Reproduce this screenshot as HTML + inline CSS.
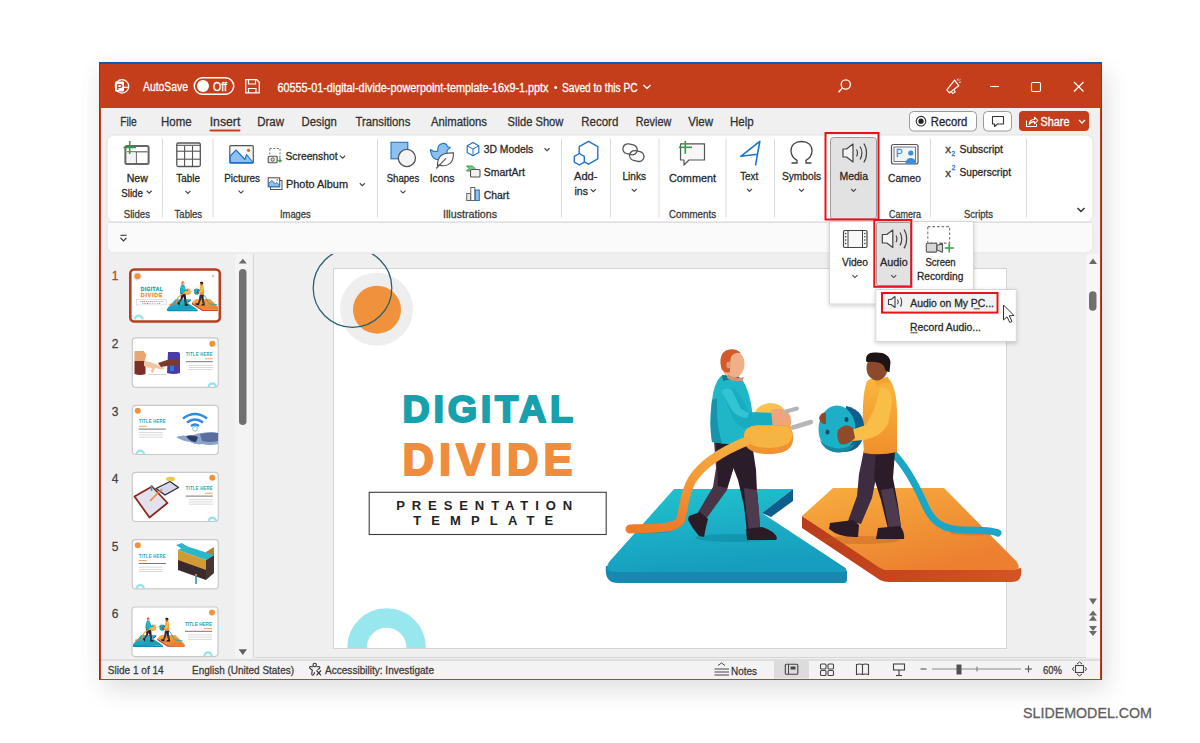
<!DOCTYPE html>
<html><head><meta charset="utf-8"><style>
html,body{margin:0;padding:0;background:#fff;width:1200px;height:743px;overflow:hidden}
#shadow{position:absolute;left:99px;top:62px;width:1003px;height:618px;box-shadow:5px 11px 24px rgba(0,0,0,0.10), 0 2px 26px rgba(0,0,0,0.04);}
svg{position:absolute;left:0;top:0}
text{font-family:"Liberation Sans",sans-serif}
</style></head><body>
<div id="shadow"></div>
<svg width="1200" height="743" viewBox="0 0 1200 743">
<rect x="99" y="62" width="1003" height="618" fill="#F0F0F0" />
<rect x="99" y="62" width="1003" height="2" fill="#0F5AA8" />
<rect x="99" y="62" width="1" height="618" fill="#2E4F78" />
<rect x="1101" y="62" width="1" height="618" fill="#2E4F78" />
<rect x="100" y="64" width="1001" height="44" fill="#C43E1C" />
<rect x="100" y="64" width="1" height="615" fill="#C43E1C" />
<rect x="1100" y="64" width="1" height="615" fill="#C43E1C" />
<rect x="100" y="679" width="1001" height="1" fill="#C43E1C" />
<rect x="101" y="108" width="999" height="25" fill="#F0F0F0" />
<rect x="107" y="135" width="986" height="87" fill="#FFFFFF" rx="7" stroke="#E3E3E3" stroke-width="1" />
<rect x="107" y="222" width="986" height="31" fill="#FAFAFA" rx="7" stroke="#E3E3E3" stroke-width="1" />
<rect x="108" y="222" width="984" height="8" fill="#FAFAFA" />
<line x1="108" y1="222.5" x2="1092" y2="222.5" stroke="#E0E0E0" stroke-width="1" />
<rect x="101" y="254" width="999" height="405" fill="#EFEFEF" />
<line x1="253.5" y1="254" x2="253.5" y2="658" stroke="#D6D6D6" stroke-width="1" />
<rect x="254" y="254" width="832" height="404" fill="#EFEFEF" />
<rect x="333.5" y="268.5" width="673" height="380" fill="#FFFFFF" stroke="#D4D4D4" stroke-width="1" />
<rect x="101" y="659" width="999" height="20" fill="#F3F3F3" />
<rect x="101" y="659" width="999" height="2" fill="#DEDEDE" />
<line x1="255" y1="657.5" x2="1086" y2="657.5" stroke="#D6D6D6" stroke-width="1" />
<circle cx="122" cy="86.4" r="6.7" fill="none" stroke="#fff" stroke-width="1.3"/>
<rect x="115" y="81.5" width="9" height="10" fill="#FFFFFF" rx="1" />
<line x1="124" y1="87.3" x2="129" y2="87.3" stroke="#FFFFFF" stroke-width="1.2" />
<text x="116.6" y="89.8" font-size="9.5" fill="#C43E1C" font-weight="bold" >P</text>
<text x="143" y="91" font-size="12" fill="#FFFFFF" stroke="#FFFFFF" stroke-width="0.28" textLength="45" lengthAdjust="spacingAndGlyphs" >AutoSave</text>
<rect x="194.25" y="77.75" width="39.5" height="16.5" fill="none" rx="8.25" stroke="#FFFFFF" stroke-width="1.5" />
<circle cx="203" cy="86" r="6" fill="#fff"/>
<text x="213" y="91" font-size="12" fill="#FFFFFF" stroke="#FFFFFF" stroke-width="0.28" textLength="14" lengthAdjust="spacingAndGlyphs" >Off</text>
<path d="M245.7,79.7 h11 l2.6,2.6 v10.5 h-13.6 z" fill="none" stroke="#FFFFFF" stroke-width="1.3" />
<path d="M248.5,80 v4 h7 v-4" fill="none" stroke="#FFFFFF" stroke-width="1.2" />
<path d="M248.5,93 v-4.5 h7.5 v4.5" fill="none" stroke="#FFFFFF" stroke-width="1.2" />
<text x="277.5" y="91.5" font-size="12" fill="#FFFFFF" stroke="#FFFFFF" stroke-width="0.28" textLength="271" lengthAdjust="spacingAndGlyphs" >60555-01-digital-divide-powerpoint-template-16x9-1.pptx</text>
<circle cx="555.7" cy="87.5" r="1.5" fill="#fff"/>
<text x="562" y="91.5" font-size="12" fill="#FFFFFF" stroke="#FFFFFF" stroke-width="0.28" textLength="75.5" lengthAdjust="spacingAndGlyphs" >Saved to this PC</text>
<path d="M643.5,85 l3.5,3.5 l3.5,-3.5" fill="none" stroke="#FFFFFF" stroke-width="1.4" />
<circle cx="845.8" cy="84.5" r="4.6" fill="none" stroke="#fff" stroke-width="1.3"/>
<line x1="842.5" y1="87.8" x2="838.5" y2="92.2" stroke="#FFFFFF" stroke-width="1.4" />
<path d="M946.8,89.8 L949.6,92.8 L958.8,85.8 L954.6,80.2 Z" fill="none" stroke="#FFFFFF" stroke-width="1.2" stroke-linejoin="round"/>
<path d="M951.2,91.6 l1.6,2 l2.4,-1.8 l-1,-1.6" fill="none" stroke="#FFFFFF" stroke-width="1.1" />
<line x1="957.2" y1="80.4" x2="958.2" y2="78.6" stroke="#FFFFFF" stroke-width="1" />
<line x1="958.8" y1="82.6" x2="960.8" y2="82" stroke="#FFFFFF" stroke-width="1" />
<line x1="959" y1="80.6" x2="960.2" y2="79.4" stroke="#FFFFFF" stroke-width="1" />
<line x1="990" y1="86.5" x2="999" y2="86.5" stroke="#FFFFFF" stroke-width="1.1" />
<rect x="1031.5" y="82.5" width="9" height="9" fill="none" rx="1.2" stroke="#FFFFFF" stroke-width="1.1" />
<line x1="1074" y1="82" x2="1083.5" y2="91.5" stroke="#FFFFFF" stroke-width="1.2" />
<line x1="1083.5" y1="82" x2="1074" y2="91.5" stroke="#FFFFFF" stroke-width="1.2" />
<text x="120.2" y="126" font-size="12.5" fill="#303030" stroke="#303030" stroke-width="0.28" textLength="16.6" lengthAdjust="spacingAndGlyphs" >File</text>
<text x="161" y="126" font-size="12.5" fill="#303030" stroke="#303030" stroke-width="0.28" textLength="30.6" lengthAdjust="spacingAndGlyphs" >Home</text>
<text x="209.7" y="126" font-size="12.5" fill="#303030" stroke="#303030" stroke-width="0.28" textLength="30.6" lengthAdjust="spacingAndGlyphs" >Insert</text>
<text x="257.2" y="126" font-size="12.5" fill="#303030" stroke="#303030" stroke-width="0.28" textLength="26.8" lengthAdjust="spacingAndGlyphs" >Draw</text>
<text x="301.5" y="126" font-size="12.5" fill="#303030" stroke="#303030" stroke-width="0.28" textLength="35.3" lengthAdjust="spacingAndGlyphs" >Design</text>
<text x="355.5" y="126" font-size="12.5" fill="#303030" stroke="#303030" stroke-width="0.28" textLength="54.8" lengthAdjust="spacingAndGlyphs" >Transitions</text>
<text x="431" y="126" font-size="12.5" fill="#303030" stroke="#303030" stroke-width="0.28" textLength="56" lengthAdjust="spacingAndGlyphs" >Animations</text>
<text x="507.5" y="126" font-size="12.5" fill="#303030" stroke="#303030" stroke-width="0.28" textLength="55.9" lengthAdjust="spacingAndGlyphs" >Slide Show</text>
<text x="581.2" y="126" font-size="12.5" fill="#303030" stroke="#303030" stroke-width="0.28" textLength="37.1" lengthAdjust="spacingAndGlyphs" >Record</text>
<text x="635.7" y="126" font-size="12.5" fill="#303030" stroke="#303030" stroke-width="0.28" textLength="35.6" lengthAdjust="spacingAndGlyphs" >Review</text>
<text x="688.2" y="126" font-size="12.5" fill="#303030" stroke="#303030" stroke-width="0.28" textLength="24.8" lengthAdjust="spacingAndGlyphs" >View</text>
<text x="730" y="126" font-size="12.5" fill="#303030" stroke="#303030" stroke-width="0.28" textLength="23.8" lengthAdjust="spacingAndGlyphs" >Help</text>
<rect x="209.5" y="129.5" width="31" height="2" fill="#C43E1C" rx="1" />
<rect x="909.5" y="111.5" width="67" height="19.5" fill="#FFFFFF" rx="4" stroke="#9A9A9A" stroke-width="1" />
<circle cx="921" cy="121.2" r="4.8" fill="none" stroke="#333" stroke-width="1.1"/>
<circle cx="921" cy="121.2" r="2.6" fill="#222"/>
<text x="930.8" y="125.8" font-size="12.5" fill="#262626" stroke="#262626" stroke-width="0.28" textLength="36.4" lengthAdjust="spacingAndGlyphs" >Record</text>
<rect x="983.5" y="111.5" width="28" height="19.5" fill="#FFFFFF" rx="4" stroke="#9A9A9A" stroke-width="1" />
<path d="M992.5,116.5 h11 v7.5 h-6 l-3,2.5 v-2.5 h-2 z" fill="none" stroke="#333" stroke-width="1.1" stroke-linejoin="round"/>
<rect x="1019" y="111" width="70" height="20" fill="#C43E1C" rx="4" />
<path d="M1026.5,120.5 v6 h10 v-2.5" fill="none" stroke="#FFFFFF" stroke-width="1.1" />
<path d="M1029,124.5 c0.5,-3.5 2.8,-5 5.5,-5 v-2.3 l3.3,3.3 l-3.3,3.3 v-2.2 c-2.2,0 -4,0.8 -5.5,2.9 z" fill="none" stroke="#FFFFFF" stroke-width="1.05" stroke-linejoin="round"/>
<text x="1040.5" y="125.8" font-size="12.5" fill="#FFFFFF" stroke="#FFFFFF" stroke-width="0.28" textLength="29" lengthAdjust="spacingAndGlyphs" >Share</text>
<path d="M1079,120 l3,3 l3,-3" fill="none" stroke="#FFFFFF" stroke-width="1.3" />
<line x1="162.5" y1="139" x2="162.5" y2="217.5" stroke="#DCDCDC" stroke-width="1" />
<line x1="213" y1="139" x2="213" y2="217.5" stroke="#DCDCDC" stroke-width="1" />
<line x1="377.5" y1="139" x2="377.5" y2="217.5" stroke="#DCDCDC" stroke-width="1" />
<line x1="561.5" y1="139" x2="561.5" y2="217.5" stroke="#DCDCDC" stroke-width="1" />
<line x1="610.5" y1="139" x2="610.5" y2="217.5" stroke="#DCDCDC" stroke-width="1" />
<line x1="659" y1="139" x2="659" y2="217.5" stroke="#DCDCDC" stroke-width="1" />
<line x1="726" y1="139" x2="726" y2="217.5" stroke="#DCDCDC" stroke-width="1" />
<line x1="774.5" y1="139" x2="774.5" y2="217.5" stroke="#DCDCDC" stroke-width="1" />
<line x1="930.5" y1="139" x2="930.5" y2="217.5" stroke="#DCDCDC" stroke-width="1" />
<line x1="1026.5" y1="139" x2="1026.5" y2="217.5" stroke="#DCDCDC" stroke-width="1" />
<text x="126.7" y="182.1" font-size="11" fill="#262626" stroke="#262626" stroke-width="0.28" textLength="21.2" lengthAdjust="spacingAndGlyphs" >New</text>
<text x="121.3" y="196.7" font-size="11" fill="#262626" stroke="#262626" stroke-width="0.28" textLength="21.6" lengthAdjust="spacingAndGlyphs" >Slide</text>
<path d="M146.7,190.75 l2.5,2.5 l2.5,-2.5" fill="none" stroke="#444" stroke-width="1.1" />
<text x="176.3" y="182.1" font-size="11" fill="#262626" stroke="#262626" stroke-width="0.28" textLength="23.7" lengthAdjust="spacingAndGlyphs" >Table</text>
<path d="M185.4,190.95 l2.5,2.5 l2.5,-2.5" fill="none" stroke="#444" stroke-width="1.1" />
<text x="224.2" y="182.1" font-size="11" fill="#262626" stroke="#262626" stroke-width="0.28" textLength="35.8" lengthAdjust="spacingAndGlyphs" >Pictures</text>
<path d="M238.5,190.55 l2.5,2.5 l2.5,-2.5" fill="none" stroke="#444" stroke-width="1.1" />
<text x="285.5" y="160" font-size="11" fill="#262626" stroke="#262626" stroke-width="0.28" textLength="52" lengthAdjust="spacingAndGlyphs" >Screenshot</text>
<path d="M340.1,155.75 l2.5,2.5 l2.5,-2.5" fill="none" stroke="#444" stroke-width="1.1" />
<text x="286" y="187.7" font-size="11" fill="#262626" stroke="#262626" stroke-width="0.28" textLength="62" lengthAdjust="spacingAndGlyphs" >Photo Album</text>
<path d="M359.8,183.25 l2.5,2.5 l2.5,-2.5" fill="none" stroke="#444" stroke-width="1.1" />
<text x="386.7" y="181.7" font-size="11" fill="#262626" stroke="#262626" stroke-width="0.28" textLength="32.5" lengthAdjust="spacingAndGlyphs" >Shapes</text>
<path d="M400.5,190.55 l2.5,2.5 l2.5,-2.5" fill="none" stroke="#444" stroke-width="1.1" />
<text x="429.7" y="181.7" font-size="11" fill="#262626" stroke="#262626" stroke-width="0.28" textLength="24.7" lengthAdjust="spacingAndGlyphs" >Icons</text>
<text x="483.7" y="153.2" font-size="11" fill="#262626" stroke="#262626" stroke-width="0.28" textLength="49.5" lengthAdjust="spacingAndGlyphs" >3D Models</text>
<path d="M544.5,148.25 l2.5,2.5 l2.5,-2.5" fill="none" stroke="#444" stroke-width="1.1" />
<text x="483.7" y="175.7" font-size="11" fill="#262626" stroke="#262626" stroke-width="0.28" textLength="41.3" lengthAdjust="spacingAndGlyphs" >SmartArt</text>
<text x="483.7" y="199" font-size="11" fill="#262626" stroke="#262626" stroke-width="0.28" textLength="25.5" lengthAdjust="spacingAndGlyphs" >Chart</text>
<text x="574" y="180.3" font-size="11" fill="#262626" stroke="#262626" stroke-width="0.28" textLength="23.5" lengthAdjust="spacingAndGlyphs" >Add-</text>
<text x="574.5" y="194.5" font-size="11" fill="#262626" stroke="#262626" stroke-width="0.28" textLength="13.5" lengthAdjust="spacingAndGlyphs" >ins</text>
<path d="M590.8,189.25 l2.5,2.5 l2.5,-2.5" fill="none" stroke="#444" stroke-width="1.1" />
<text x="622.5" y="180.3" font-size="11" fill="#262626" stroke="#262626" stroke-width="0.28" textLength="23.5" lengthAdjust="spacingAndGlyphs" >Links</text>
<path d="M631.7,188.95 l2.5,2.5 l2.5,-2.5" fill="none" stroke="#444" stroke-width="1.1" />
<text x="669" y="181.7" font-size="11" fill="#262626" stroke="#262626" stroke-width="0.28" textLength="47" lengthAdjust="spacingAndGlyphs" >Comment</text>
<text x="740.2" y="180.3" font-size="11" fill="#262626" stroke="#262626" stroke-width="0.28" textLength="18" lengthAdjust="spacingAndGlyphs" >Text</text>
<path d="M747.0,188.95 l2.5,2.5 l2.5,-2.5" fill="none" stroke="#444" stroke-width="1.1" />
<text x="782" y="180.3" font-size="11" fill="#262626" stroke="#262626" stroke-width="0.28" textLength="39" lengthAdjust="spacingAndGlyphs" >Symbols</text>
<path d="M799.0,188.95 l2.5,2.5 l2.5,-2.5" fill="none" stroke="#444" stroke-width="1.1" />
<text x="888" y="182" font-size="11" fill="#262626" stroke="#262626" stroke-width="0.28" textLength="33" lengthAdjust="spacingAndGlyphs" >Cameo</text>
<text x="959.5" y="153" font-size="11" fill="#262626" stroke="#262626" stroke-width="0.28" textLength="43.5" lengthAdjust="spacingAndGlyphs" >Subscript</text>
<text x="959.5" y="176" font-size="11" fill="#262626" stroke="#262626" stroke-width="0.28" textLength="51.5" lengthAdjust="spacingAndGlyphs" >Superscript</text>
<text x="123.8" y="217.5" font-size="10.5" fill="#3A3A3A" stroke="#3A3A3A" stroke-width="0.28" textLength="26.2" lengthAdjust="spacingAndGlyphs" >Slides</text>
<text x="174.6" y="217.5" font-size="10.5" fill="#3A3A3A" stroke="#3A3A3A" stroke-width="0.28" textLength="27.5" lengthAdjust="spacingAndGlyphs" >Tables</text>
<text x="280" y="217.5" font-size="10.5" fill="#3A3A3A" stroke="#3A3A3A" stroke-width="0.28" textLength="30.7" lengthAdjust="spacingAndGlyphs" >Images</text>
<text x="443" y="217.5" font-size="10.5" fill="#3A3A3A" stroke="#3A3A3A" stroke-width="0.28" textLength="54" lengthAdjust="spacingAndGlyphs" >Illustrations</text>
<text x="669" y="217.5" font-size="10.5" fill="#3A3A3A" stroke="#3A3A3A" stroke-width="0.28" textLength="47" lengthAdjust="spacingAndGlyphs" >Comments</text>
<text x="889" y="217.5" font-size="10.5" fill="#3A3A3A" stroke="#3A3A3A" stroke-width="0.28" textLength="32" lengthAdjust="spacingAndGlyphs" >Camera</text>
<text x="964" y="217.5" font-size="10.5" fill="#3A3A3A" stroke="#3A3A3A" stroke-width="0.28" textLength="29" lengthAdjust="spacingAndGlyphs" >Scripts</text>
<path d="M1077.5,208 l3.5,3.5 l3.5,-3.5" fill="none" stroke="#333" stroke-width="1.5" />
<rect x="125.4" y="146" width="23.2" height="18" fill="#FFFFFF" rx="1.5" stroke="#666" stroke-width="2" />
<line x1="127" y1="151.8" x2="147.5" y2="151.8" stroke="#666" stroke-width="1.2" />
<line x1="136.3" y1="151.8" x2="136.3" y2="163" stroke="#666" stroke-width="1.2" />
<rect x="127.2" y="152.5" width="8.5" height="10" fill="#F2F2F2" />
<line x1="123.5" y1="147.5" x2="136" y2="147.5" stroke="#2EA043" stroke-width="1.6" />
<line x1="129.7" y1="141" x2="129.7" y2="154" stroke="#2EA043" stroke-width="1.6" />
<rect x="176.8" y="143" width="23.5" height="23.5" fill="#FFFFFF" rx="1.5" stroke="#555" stroke-width="1.3" />
<line x1="176.8" y1="145.3" x2="200.3" y2="145.3" stroke="#555" stroke-width="1.1" />
<line x1="184.6" y1="146" x2="184.6" y2="166.5" stroke="#555" stroke-width="1.1" />
<line x1="192.5" y1="146" x2="192.5" y2="166.5" stroke="#555" stroke-width="1.1" />
<line x1="176.8" y1="151.2" x2="200.3" y2="151.2" stroke="#555" stroke-width="1.1" />
<line x1="176.8" y1="159.2" x2="200.3" y2="159.2" stroke="#555" stroke-width="1.1" />
<rect x="229.8" y="145.7" width="23.5" height="17.5" fill="#F7F7F7" rx="1" stroke="#555" stroke-width="1.2" />
<path d="M230.3,156 L236,150 L245,159.5 L246.5,154.5 L253,162.5 L230.3,162.5 Z" fill="#8CC0EE" stroke="#1F73C8" stroke-width="1.1" stroke-linejoin="round"/>
<circle cx="248.5" cy="150.3" r="1.6" fill="#E8641E"/>
<rect x="269.8" y="148.5" width="10.2" height="8.5" fill="none" stroke="#777" stroke-width="1" stroke-dasharray="2,1.5"/>
<rect x="268.2" y="156.3" width="9" height="6.5" fill="#E6E6E6" rx="1" stroke="#555" stroke-width="1.1" />
<circle cx="272.7" cy="159.6" r="1.6" fill="none" stroke="#555" stroke-width="0.9"/>
<path d="M280,157.5 v4 M278.3,160.2 l1.7,1.8 l1.7,-1.8" fill="none" stroke="#2EA043" stroke-width="1.2" />
<rect x="270.5" y="180.5" width="11.5" height="9" fill="none" stroke="#555" stroke-width="1" />
<rect x="268.2" y="177.8" width="11.5" height="9" fill="#FFFFFF" stroke="#555" stroke-width="1.1" />
<path d="M268.8,183 l3,-2.5 l3.5,3.3 l1.5,-1.5 l2.5,3 v1.3 h-10.5 z" fill="#8CC0EE" stroke="#1F73C8" stroke-width="0.9" />
<circle cx="277.3" cy="179.8" r="0.9" fill="#E8641E"/>
<rect x="391" y="142.3" width="16.8" height="16.5" fill="#8CC0EE" stroke="#1F73C8" stroke-width="1.1" />
<circle cx="406.9" cy="158" r="8.6" fill="#F4F4F4" stroke="#555" stroke-width="1.3"/>
<path d="M430.4,149.5 c2,2 5,2.3 7.5,1.5 c-0.5,-3 0.5,-6.5 4.5,-7.5 c2.8,-0.6 4.6,1 5,3.3 l2.8,0.5 l-3,3 c0.5,4.5 -2.5,8.3 -7,9.3 c-5.5,1 -9,-2.5 -9.8,-10.1 z" fill="#8CC0EE" stroke="#1F73C8" stroke-width="1.1" stroke-linejoin="round"/>
<path d="M437.5,166 c-0.5,-5 1.5,-11 8,-12.5 c3,-0.7 6,-0.6 8,-0.6 c0,3 -0.5,8 -3.5,10.5 c-3,2.5 -8,2.5 -11,1.5 z" fill="#FFFFFF" stroke="#555" stroke-width="1.1" />
<line x1="436.2" y1="168.5" x2="446" y2="158.3" stroke="#555" stroke-width="1.1" />
<path d="M473,142.5 l5.8,3.3 v6.6 l-5.8,3.3 l-5.8,-3.3 v-6.6 z" fill="#FFFFFF" stroke="#1F73C8" stroke-width="1.2" stroke-linejoin="round"/>
<path d="M467.5,146 l5.5,3 l5.5,-3 M473,149 v6.5" fill="none" stroke="#1F73C8" stroke-width="1" />
<path d="M466.5,166 h6 l2.5,2.5 l-2.5,2.5 h-6 l2.5,-2.5 z" fill="#7CCB8A" stroke="#2EA043" stroke-width="1" />
<rect x="470.5" y="169.5" width="9.5" height="7.5" fill="#F0F0F0" rx="1" stroke="#555" stroke-width="1.1" />
<rect x="466.7" y="193.5" width="3.8" height="7" fill="#E8E8E8" stroke="#666" stroke-width="1" />
<rect x="470.8" y="187.5" width="4" height="13" fill="#FFFFFF" stroke="#666" stroke-width="1" />
<rect x="475.3" y="190" width="4" height="10.5" fill="#8CC0EE" stroke="#1F73C8" stroke-width="1" />
<path d="M588.5,141.3 l9.3,5.3 v12.2 l-9.3,5.4 l-9.3,-5.4 v-12.2 z" fill="#FFFFFF" stroke="#1F73C8" stroke-width="1.4" stroke-linejoin="round"/>
<path d="M579.3,153.5 l5,2.9 v5.7 l-5,2.9 l-5,-2.9 v-5.7 z" fill="#FFFFFF" stroke="#1F73C8" stroke-width="1.4" stroke-linejoin="round"/>
<rect x="622.8" y="144.3" width="14.5" height="10" rx="5" fill="none" stroke="#555" stroke-width="1.3" transform="rotate(12 630 149.3)"/>
<rect x="629.5" y="151" width="14.5" height="10" rx="5" fill="none" stroke="#555" stroke-width="1.3" transform="rotate(12 636.7 156)"/>
<path d="M680.5,143.8 h24 v16.2 h-15.5 l-5,5 v-5 h-3.5 z" fill="#F7F7F7" stroke="#555" stroke-width="1.2" stroke-linejoin="round"/>
<line x1="679" y1="147.3" x2="692" y2="147.3" stroke="#2EA043" stroke-width="1.6" />
<line x1="685.3" y1="140.8" x2="685.3" y2="153.8" stroke="#2EA043" stroke-width="1.6" />
<path d="M740.8,156.3 L759.8,141.3 L755.6,164.8 M741,156.3 L757.5,154.3" fill="none" stroke="#1F73C8" stroke-width="1.6" stroke-linecap="round" stroke-linejoin="round"/>
<path d="M791.5,163 h5.5 v-2.6 c-3.8,-2.2 -6,-5.8 -6,-9.6 c0,-5.8 4.2,-9.3 10.5,-9.3 c6.3,0 10.5,3.5 10.5,9.3 c0,3.8 -2.2,7.4 -6,9.6 v2.6 h5.5" fill="none" stroke="#444" stroke-width="1.3" />
<rect x="830.5" y="137.5" width="46" height="81.5" fill="#E2E2E2" rx="3" stroke="#9C9C9C" stroke-width="1" />
<path d="M843,149 h3.5 l6.5,-5 v18 l-6.5,-5 h-3.5 z" fill="#F4F4F4" stroke="#444" stroke-width="1.2" stroke-linejoin="round"/>
<path d="M856.5,149.5 c1.3,1.8 1.3,5.2 0,7 M860,146.5 c2.5,3.5 2.5,9.5 0,13 M863.8,143.5 c3.6,5 3.6,14 0,19" fill="none" stroke="#444" stroke-width="1.2" />
<text x="839.5" y="180.3" font-size="11" fill="#262626" stroke="#262626" stroke-width="0.28" textLength="28.5" lengthAdjust="spacingAndGlyphs" >Media</text>
<path d="M851.0,188.95 l2.5,2.5 l2.5,-2.5" fill="none" stroke="#444" stroke-width="1.1" />
<rect x="825.5" y="133" width="53" height="86.5" fill="none" stroke="#EC1018" stroke-width="2" />
<rect x="891.5" y="144.5" width="26.5" height="19.5" fill="#FFFFFF" rx="2" stroke="#555" stroke-width="1.2" />
<rect x="894" y="147" width="21.5" height="14.5" fill="#F0F6FC" stroke="#555" stroke-width="0.8" />
<text x="896" y="157" font-size="10" fill="#3B8EDB" stroke="#3B8EDB" stroke-width="0.28" >P</text>
<circle cx="910.8" cy="153" r="2.6" fill="#3B8EDB"/>
<path d="M905.5,164 c0,-4 2.5,-6 5.3,-6 c2.8,0 5.3,2 5.3,6 z" fill="#3B8EDB" />
<text x="945.3" y="153" font-size="11.5" fill="#333" stroke="#333" stroke-width="0.28" >x</text>
<text x="951.5" y="155.5" font-size="6.5" fill="#1F73C8" stroke="#1F73C8" stroke-width="0.28" >2</text>
<text x="945.3" y="176.5" font-size="11.5" fill="#333" stroke="#333" stroke-width="0.28" >x</text>
<text x="951.7" y="169.5" font-size="6.5" fill="#1F73C8" stroke="#1F73C8" stroke-width="0.28" >2</text>
<line x1="120.5" y1="235.3" x2="126.5" y2="235.3" stroke="#333" stroke-width="1.1" />
<path d="M120.5,237.8 l3,3 l3,-3" fill="none" stroke="#333" stroke-width="1.2" />
<rect x="235" y="254" width="17" height="404" fill="#F4F4F4" />
<path d="M238.8,263.6 L242.8,258.8 L246.8,263.6 Z" fill="#6A6A6A" />
<rect x="239" y="269" width="7.5" height="156" fill="#707070" rx="3.75" />
<path d="M238.6,649.2 L242.8,655 L247,649.2 Z" fill="#5E5E5E" />
<rect x="1086.5" y="254" width="13" height="403" fill="#F7F7F7" />
<path d="M1089,264 L1093,258.5 L1097,264 Z" fill="#6A6A6A" />
<rect x="1089" y="291.2" width="7.5" height="19.5" fill="#707070" rx="3.75" />
<path d="M1089,598.5 L1093,604.4 L1097,598.5 Z" fill="#6A6A6A" />
<path d="M1089,615.5 L1093,610.4 L1097,615.5 Z M1089,620.7 L1093,615.6 L1097,620.7 Z" fill="#6A6A6A" />
<path d="M1089,626 L1093,631.1 L1097,626 Z M1089,631 L1093,636.1 L1097,631 Z" fill="#6A6A6A" />
<defs>
<linearGradient id="gTealTop" x1="0" y1="0" x2="0.3" y2="1"><stop offset="0" stop-color="#22C3CE"/><stop offset="1" stop-color="#169DBF"/></linearGradient>
<linearGradient id="gOrTop" x1="0" y1="0" x2="0.6" y2="1"><stop offset="0" stop-color="#F7AE3E"/><stop offset="1" stop-color="#EC7F30"/></linearGradient>
<linearGradient id="gPlug" x1="0" y1="0" x2="0" y2="1"><stop offset="0" stop-color="#F8C24C"/><stop offset="1" stop-color="#F0952E"/></linearGradient>
<linearGradient id="gShirtY" x1="0" y1="0" x2="0" y2="1"><stop offset="0" stop-color="#F9B63E"/><stop offset="1" stop-color="#F0902A"/></linearGradient>
<linearGradient id="gCableO" x1="0" y1="0" x2="0" y2="1"><stop offset="0" stop-color="#F6B040"/><stop offset="1" stop-color="#EE7A2A"/></linearGradient>
<clipPath id="slideClip"><rect x="334" y="269" width="672" height="379"/></clipPath>
<g id="slideContent">
<circle cx="376.5" cy="309.2" r="36.5" fill="#EEEEEE"/>
<circle cx="377" cy="309.7" r="24" fill="#F0913C"/>
<circle cx="967" cy="308" r="10" fill="#F7C99C"/><circle cx="967" cy="308" r="5" fill="#F4B070"/>
<g clip-path="url(#slideClip)"><circle cx="386.6" cy="647.5" r="29.5" fill="none" stroke="#98E6EE" stroke-width="19.5"/></g>
<text x="402.6" y="421.6" font-size="37.8" font-weight="bold" fill="#17A1AD" stroke="#17A1AD" stroke-width="2" stroke-linejoin="round" textLength="170.5" lengthAdjust="spacing">DIGITAL</text>
<text x="402.6" y="474.8" font-size="43.5" font-weight="bold" fill="#F08D3D" stroke="#F08D3D" stroke-width="2" stroke-linejoin="round" textLength="169.8" lengthAdjust="spacing">DIVIDE</text>
<rect x="369.2" y="492.3" width="237" height="42.2" fill="none" stroke="#3C3C3C" stroke-width="1.1" />
<text x="396.2" y="510.2" font-size="13" fill="#222" textLength="176" lengthAdjust="spacing" font-weight="bold" >PRESENTATION</text>
<text x="413.2" y="525.3" font-size="13" fill="#222" textLength="140" lengthAdjust="spacing" font-weight="bold" >TEMPLATE</text>
<g id="illusOnly">
<path d="M606,566 Q604,583 618,583 H844 Q847,583 847,579 V571 Z" fill="#1689B0" />
<path d="M674,489 H793 L762,513 L844,567 Q848.5,570 845,572 H616 Q603,572 609,562 Z" fill="url(#gTealTop)" />
<path d="M793,489 V501 L771,517 L762,513 Z" fill="#0F5F8E" />
<linearGradient id="gOrFront" x1="0" y1="0" x2="1" y2="0"><stop offset="0" stop-color="#B93C1B"/><stop offset="0.45" stop-color="#C8461E"/><stop offset="1" stop-color="#D45523"/></linearGradient>
<path d="M802,516 V528 L880,580 Q884,582 889,582 H1012 Q1023,582 1021,568 L1012,570 H886 Z" fill="url(#gOrFront)" />
<path d="M833,488 H944 L1016,561 Q1023,570 1012,570 H887 Q883,570 880,568 L802,516 Z" fill="url(#gOrTop)" />
<ellipse cx="735" cy="538" rx="40" ry="4" fill="#0F7F9A" opacity="0.45"/>
<ellipse cx="860" cy="540" rx="40" ry="4" fill="#B45A20" opacity="0.35"/>
<ellipse cx="650" cy="531" rx="20" ry="2.5" fill="#0F7F9A" opacity="0.4"/>
<ellipse cx="975" cy="533" rx="25" ry="2.5" fill="#B45A20" opacity="0.3"/>
<path d="M714,441 L738,443 L733,470 L727,490 L706,519 L697,514 L713,487 L716,468 Z" fill="#4A3548" />
<path d="M716,441 L738,443 L734,466 L727,488 L718,486 Z" fill="#2A1C28" />
<path d="M689,516 L700,512 L708,519 L706,527 L704,537 L699,536 Q692,528 688,520 Z" fill="#2A1B26" />
<path d="M730,441 L752,443 L756,470 L757,492 L759,512 L760,531 L747,532 L744,506 L738,480 L731,462 Z" fill="#2A1C28" />
<path d="M744,488 L757,490 L759,512 L760,531 L749,532 L746,510 Z" fill="#4E3A4E" />
<path d="M746,529 L762,527 Q775,531 777,538 L776,540 H747 Z" fill="#2A1B26" />
<path d="M721,376 Q733,372 742,379 Q750,392 752,410 L753,443 Q731,446 712,442 Q709,424 712,400 Q714,383 721,376 Z" fill="#1FB6C8" />
<path d="M712,400 Q709,424 712,442 Q718,443 722,443 Q716,425 717,398 Z" fill="#1794AB" />
<path d="M722,375 L738,376 L741,381 Q731,378 723,381 Z" fill="#137A8E" />
<ellipse cx="733" cy="364" rx="11.5" ry="14" fill="#EFB088"/>
<path d="M721.5,369 Q718,355 726,350.5 Q735,347 741,353 Q734,352 731,357 Q729,364 730,372 Q725,374 721.5,369 Z" fill="#D35A2A" />
<ellipse cx="728.5" cy="365" rx="2.2" ry="3.2" fill="#E39A72"/>
<path d="M728,374 Q735,380 744,377 L742,381 Q733,382 727,378 Z" fill="#D8926A" />
<path d="M752,428 Q751,405 770,403 Q788,403 791,428 Z" fill="#F9C250" />
<path d="M722,392 Q731,383 739,394 L749,412 L776,413 L777,426 L745,428 Q735,426 731,414 Z" fill="#19ABC0" />
<path d="M721,391 Q727,386 732,390 L741,409 L749,413 L747,418 Q738,417 733,412 Z" fill="#33C4D3" />
<path d="M771,410 Q780,406 788,412 Q793,419 790,427 L773,428 Z" fill="#EFA57C" />
<path d="M744,437 Q744,426 758,425 L788,425 Q794,430 793,440 Q792,453 772,454 Q748,455 744,442 Z" fill="#F0922F" />
<path d="M744,436 Q744,426 758,425.5 L787,425.5 Q793,430 792,437 Q790,447 770,448 Q748,448 744,436 Z" fill="#F6B443" />
<line x1="786" y1="411.5" x2="797" y2="408.5" stroke="#B5B5B5" stroke-width="4" stroke-linecap="round"/>
<line x1="793" y1="427.5" x2="811" y2="422" stroke="#B5B5B5" stroke-width="4.5" stroke-linecap="round"/>
<path d="M747,441 C725,450 703,462 692,480 C683,495 684,512 680,521 C675,528 662,528 630,529" fill="none" stroke="url(#gCableO)" stroke-width="9" stroke-linecap="round"/>
<path d="M892,452 C906,466 916,485 924,503 C932,522 942,530 965,530 C985,530 994,531 998,533" fill="none" stroke="#1AA6C4" stroke-width="7" stroke-linecap="round"/>
<path d="M864,450 L882,452 L876,478 L872,498 L861,524 L848,521 L857,496 L859,474 Z" fill="#3E2D40" />
<path d="M830,523 L853,520 L859,525 L858,537 Q840,538 829,529 Z" fill="#2A1B26" />
<path d="M876,450 L895,452 L893,478 L898,505 L901,527 L888,529 L881,500 L874,478 Z" fill="#2A1C28" />
<path d="M881,490 L893,488 L898,510 L901,527 L889,529 Z" fill="#4E3A4E" />
<path d="M878,528 L900,526 Q905,532 904,539 L876,539 Z" fill="#2A1B26" />
<path d="M867,381 Q878,374 890,380 Q897,390 897,415 L897,452 Q880,456 864,453 Q862,430 863,405 Q864,388 867,381 Z" fill="url(#gShirtY)" />
<path d="M874,379 L888,377 L891,384 Q882,381 877,387 Z" fill="#F4A52E" />
<path d="M846,406 Q866,410 864,432 Q862,452 843,452 Z" fill="#125E8A" />
<ellipse cx="837" cy="429" rx="18.5" ry="23.5" fill="#1DAFC7"/>
<path d="M820,440 Q824,452 840,452.5 Q852,452 855,443 Q845,450 835,448 Q824,446 820,440 Z" fill="#17889F" />
<ellipse cx="846.5" cy="419.5" rx="2" ry="2.6" fill="#0D4C6A"/>
<ellipse cx="827.5" cy="432" rx="2" ry="2.6" fill="#0D4C6A"/>
<path d="M880,388 Q892,386 892,402 L888,424 Q881,437 864,440 L852,441 L851,430 L866,425 L874,410 Z" fill="#F9BE48" />
<path d="M838,430 Q846,422 853,428 L855,438 Q848,446 840,444 Q836,438 838,430 Z" fill="#8E4A2A" />
<path d="M819,418 Q821,412 826,413 L826,424 Q821,425 819,418 Z" fill="#8E4A2A" />
<ellipse cx="877" cy="368" rx="10.5" ry="12.5" fill="#8A4A2B"/>
<path d="M866,361 Q865,352 875,352.5 Q889,352 890.5,362 L889.5,372 Q885,372 884,366 Q880,361 867,362 Z" fill="#1E1416" />
</g>
</g>
</defs>
<clipPath id="canvasClip"><rect x="254" y="254" width="832" height="404"/></clipPath>
<g clip-path="url(#canvasClip)"><use href="#slideContent"/><circle cx="352.5" cy="288" r="39.3" fill="none" stroke="#24606F" stroke-width="1.25"/></g>
<text x="111.7" y="279.5" font-size="12" fill="#C4411E" stroke="#C4411E" stroke-width="0.28" >1</text>
<text x="111.7" y="348" font-size="12" fill="#444" stroke="#444" stroke-width="0.28" >2</text>
<text x="111.7" y="415.5" font-size="12" fill="#444" stroke="#444" stroke-width="0.28" >3</text>
<text x="111.7" y="483" font-size="12" fill="#444" stroke="#444" stroke-width="0.28" >4</text>
<text x="111.7" y="550.5" font-size="12" fill="#444" stroke="#444" stroke-width="0.28" >5</text>
<text x="111.7" y="618" font-size="12" fill="#444" stroke="#444" stroke-width="0.28" >6</text>
<rect x="130.3" y="269.5" width="89.5" height="52" fill="#FFFFFF" rx="4" stroke="#B5401F" stroke-width="2.6" />
<clipPath id="t1clip"><rect x="132" y="271" width="86" height="49" rx="2.5"/></clipPath>
<g clip-path="url(#t1clip)"><use href="#slideContent" transform="translate(132,271) scale(0.12798) translate(-334,-269)"/></g>
<rect x="132.3" y="337.9" width="86" height="49.4" fill="#FFFFFF" rx="3.5" stroke="#C9C9C9" stroke-width="1.2" />
<circle cx="212.3" cy="343.7" r="3" fill="#F0913C"/>
<g><clipPath id="rc337"><rect x="132.3" y="337.9" width="86" height="49"/></clipPath><circle cx="212.3" cy="386.9" r="3.6" fill="none" stroke="#8FE3EC" stroke-width="2.2" clip-path="url(#rc337)"/></g>
<text x="185.8" y="355.9" font-size="4.6" font-weight="bold" fill="#1FA3B3" textLength="27" lengthAdjust="spacingAndGlyphs" style="letter-spacing:0.3px">TITLE HERE</text>
<rect x="204.8" y="358.4" width="8" height="0.8" fill="#F0913C" />
<rect x="185.8" y="361.2" width="27" height="1" fill="#777" />
<rect x="188.8" y="364.9" width="24" height="0.8" fill="#CFCFCF" />
<rect x="188.8" y="367.09999999999997" width="24" height="0.8" fill="#CFCFCF" />
<rect x="188.8" y="369.29999999999995" width="24" height="0.8" fill="#CFCFCF" />
<path d="M134.5,351 h9 l3,4 l-2,6 h-10 z" fill="#E6A870" />
<path d="M134.5,361 h11 v13 q-5,2 -11,0 z" fill="#7E2F25" />
<path d="M144,361 q8,1 14,4 l7,3 q-2,2 -5,1 l-5,-1 l-2,5 q-2,0 -2,-2 l1,-3 q-5,0 -8,-2 z" fill="#F2C4A2" />
<path d="M168,352 h10 q2,0 2,2 v19 q-6,2 -13,0 z" fill="#4B3BA8" />
<rect x="170" y="362" width="4" height="9" fill="#2E7AD6" />
<path d="M158,363 l9,-3 l13,0 v5 l-13,1 l-6,1 z" fill="#7A3A2E" />
<line x1="148" y1="374.5" x2="166" y2="374.5" stroke="#CCCCCC" stroke-width="0.8" />
<rect x="132.3" y="405.3" width="86" height="49.2" fill="#FFFFFF" rx="3.5" stroke="#C9C9C9" stroke-width="1.2" />
<circle cx="137.8" cy="410.8" r="3" fill="#F0913C"/>
<g><clipPath id="rc405"><rect x="132.3" y="405.3" width="86" height="49"/></clipPath><circle cx="140.3" cy="454.3" r="3.6" fill="none" stroke="#8FE3EC" stroke-width="2.2" clip-path="url(#rc405)"/></g>
<text x="138.8" y="423.3" font-size="4.6" font-weight="bold" fill="#1FA3B3" textLength="27" lengthAdjust="spacingAndGlyphs" style="letter-spacing:0.3px">TITLE HERE</text>
<rect x="138.8" y="425.8" width="8" height="0.8" fill="#F0913C" />
<rect x="138.8" y="428.6" width="27" height="1" fill="#777" />
<rect x="138.8" y="432.3" width="24" height="0.8" fill="#CFCFCF" />
<rect x="138.8" y="434.5" width="24" height="0.8" fill="#CFCFCF" />
<rect x="138.8" y="436.7" width="24" height="0.8" fill="#CFCFCF" />
<path d="M183,418.5 q12,-9 24,0" fill="none" stroke="#2E8AE0" stroke-width="2.6" />
<path d="M187,422.5 q8,-6 16,0" fill="none" stroke="#2E8AE0" stroke-width="2.4" />
<path d="M191,426 q4,-3 8,0" fill="none" stroke="#2E8AE0" stroke-width="2.2" />
<circle cx="195" cy="428.8" r="2.4" fill="none" stroke="#7CC4EE" stroke-width="1"/>
<path d="M176,437 q8,-3 14,0 q6,-4 12,-4 q10,-2 16,0 v11 q-8,2 -16,0 q-6,1 -12,-2 q-8,-1 -14,-5 z" fill="#8AA4CC" />
<path d="M186,436 q6,-2 12,1 l-2,5 q-6,0 -10,-6 z" fill="#2A3C6A" />
<path d="M200,434 q8,-2 18,-1 v8 q-8,2 -16,0 z" fill="#5A6E9E" />
<rect x="132.3" y="472.3" width="86" height="49.2" fill="#FFFFFF" rx="3.5" stroke="#C9C9C9" stroke-width="1.2" />
<circle cx="212.3" cy="477.8" r="3" fill="#F0913C"/>
<g><clipPath id="rc472"><rect x="132.3" y="472.3" width="86" height="49"/></clipPath><circle cx="212.3" cy="521.3" r="3.6" fill="none" stroke="#8FE3EC" stroke-width="2.2" clip-path="url(#rc472)"/></g>
<text x="185.8" y="490.3" font-size="4.6" font-weight="bold" fill="#1FA3B3" textLength="27" lengthAdjust="spacingAndGlyphs" style="letter-spacing:0.3px">TITLE HERE</text>
<rect x="204.8" y="492.8" width="8" height="0.8" fill="#F0913C" />
<rect x="185.8" y="495.6" width="27" height="1" fill="#777" />
<rect x="188.8" y="499.3" width="24" height="0.8" fill="#CFCFCF" />
<rect x="188.8" y="501.5" width="24" height="0.8" fill="#CFCFCF" />
<rect x="188.8" y="503.7" width="24" height="0.8" fill="#CFCFCF" />
<path d="M134.5,496.5 L152,486.5 L167.5,503 L149.5,517.5 Z" fill="#E2E2EE" stroke="#8A2A1E" stroke-width="1.8" stroke-linejoin="round"/>
<path d="M156,488.5 L170,481.5 L178.5,487.5 L165,495 Z" fill="#D8D8E8" stroke="#2A2A3A" stroke-width="1.3" stroke-linejoin="round"/>
<line x1="150" y1="501" x2="162" y2="489" stroke="#E8863A" stroke-width="1.6" />
<ellipse cx="170.5" cy="479" rx="4.5" ry="2.2" fill="#F6C64A"/>
<line x1="151.5" y1="485" x2="151.5" y2="491" stroke="#2AA6C0" stroke-width="1.6" />
<rect x="132.3" y="539.7" width="86" height="49.2" fill="#FFFFFF" rx="3.5" stroke="#C9C9C9" stroke-width="1.2" />
<circle cx="137.8" cy="545.2" r="3" fill="#F0913C"/>
<g><clipPath id="rc539"><rect x="132.3" y="539.7" width="86" height="49"/></clipPath><circle cx="140.3" cy="588.7" r="3.6" fill="none" stroke="#8FE3EC" stroke-width="2.2" clip-path="url(#rc539)"/></g>
<text x="138.8" y="557.7" font-size="4.6" font-weight="bold" fill="#1FA3B3" textLength="27" lengthAdjust="spacingAndGlyphs" style="letter-spacing:0.3px">TITLE HERE</text>
<rect x="138.8" y="560.2" width="8" height="0.8" fill="#F0913C" />
<rect x="138.8" y="563.0" width="27" height="1" fill="#777" />
<rect x="138.8" y="566.7" width="24" height="0.8" fill="#CFCFCF" />
<rect x="138.8" y="568.9000000000001" width="24" height="0.8" fill="#CFCFCF" />
<rect x="138.8" y="571.1" width="24" height="0.8" fill="#CFCFCF" />
<path d="M178,556 l28,10 v14 l-28,-10 z" fill="#3A2A2E" />
<path d="M178,550 l28,10 v10 l-28,-10 z" fill="#D19A35" />
<path d="M206,560 l8,-5 v18 l-8,7 z" fill="#4A3430" />
<path d="M206,560 l8,-5 v-8 l-8,5 z" fill="#B47E2A" />
<path d="M178,550 l8,-4 l28,9 l-8,5 z" fill="#2CB6C9" />
<path d="M176,545 l6,-2 l6,4 l-6,2 z" fill="#2CB6C9" />
<line x1="196" y1="576" x2="196" y2="584" stroke="#2A8AB0" stroke-width="1.5" />
<circle cx="196" cy="575" r="1.2" fill="#C97A4A"/>
<rect x="132" y="607" width="86" height="49.6" fill="#FFFFFF" rx="3.5" stroke="#C9C9C9" stroke-width="1.2" />
<clipPath id="t6clip"><rect x="133" y="608" width="84" height="48"/></clipPath>
<g clip-path="url(#t6clip)"><g transform="translate(132.5,617.4) scale(0.1265) translate(-606,-349)"><use href="#illusOnly"/></g></g>
<circle cx="212" cy="612.5" r="3" fill="#F0913C"/>
<text x="185" y="625.5" font-size="4.6" font-weight="bold" fill="#1FA3B3" textLength="27" lengthAdjust="spacingAndGlyphs">TITLE HERE</text>
<rect x="204" y="628" width="8" height="0.8" fill="#F0913C" />
<rect x="185" y="630.8" width="27" height="1" fill="#777" />
<rect x="188" y="634.5" width="24" height="0.8" fill="#CFCFCF" />
<rect x="188" y="636.7" width="24" height="0.8" fill="#CFCFCF" />
<rect x="188" y="638.9" width="24" height="0.8" fill="#CFCFCF" />
<g clip-path="url(#t6clip)"><circle cx="208" cy="656" r="3.6" fill="none" stroke="#8FE3EC" stroke-width="2.2"/></g>
<filter id="dsh" x="-20%" y="-20%" width="140%" height="140%"><feDropShadow dx="0" dy="1.5" stdDeviation="2" flood-color="#000" flood-opacity="0.18"/></filter>
<rect x="829.5" y="221.5" width="144" height="82.5" fill="#FFFFFF" stroke="#D6D6D6" stroke-width="1" filter="url(#dsh)"/>
<rect x="843.5" y="230.5" width="23.5" height="17" fill="#F8F8F8" rx="1.2" stroke="#444" stroke-width="1.2" />
<line x1="848" y1="230.5" x2="848" y2="247.5" stroke="#444" stroke-width="1" />
<line x1="862.5" y1="230.5" x2="862.5" y2="247.5" stroke="#444" stroke-width="1" />
<circle cx="845.7" cy="233.5" r="0.75" fill="#333"/><circle cx="864.8" cy="233.5" r="0.75" fill="#333"/>
<circle cx="845.7" cy="236.8" r="0.75" fill="#333"/><circle cx="864.8" cy="236.8" r="0.75" fill="#333"/>
<circle cx="845.7" cy="240.1" r="0.75" fill="#333"/><circle cx="864.8" cy="240.1" r="0.75" fill="#333"/>
<circle cx="845.7" cy="243.4" r="0.75" fill="#333"/><circle cx="864.8" cy="243.4" r="0.75" fill="#333"/>
<text x="842" y="265.9" font-size="11" fill="#262626" stroke="#262626" stroke-width="0.28" textLength="26" lengthAdjust="spacingAndGlyphs" >Video</text>
<path d="M852.5,275.05 l2.5,2.5 l2.5,-2.5" fill="none" stroke="#444" stroke-width="1.1" />
<rect x="876.5" y="222.5" width="34" height="63" fill="#E2E2E2" rx="2" stroke="#9C9C9C" stroke-width="1" />
<path d="M882.3,234.5 h4.5 l6,-4.5 v17.5 l-6,-4.5 h-4.5 z" fill="#F4F4F4" stroke="#444" stroke-width="1.2" stroke-linejoin="round"/>
<path d="M896,235.5 c1.2,1.6 1.2,5 0,6.6 M900,232.5 c2.3,3.3 2.3,9.5 0,12.8 M904,229.5 c3.5,4.8 3.5,14 0,18.8" fill="none" stroke="#444" stroke-width="1.2" />
<text x="880" y="265.9" font-size="11" fill="#262626" stroke="#262626" stroke-width="0.28" textLength="27.7" lengthAdjust="spacingAndGlyphs" >Audio</text>
<path d="M891.2,275.05 l2.5,2.5 l2.5,-2.5" fill="none" stroke="#444" stroke-width="1.1" />
<rect x="874.3" y="220" width="37" height="66.8" fill="none" stroke="#EC1018" stroke-width="2" />
<rect x="927.8" y="226.6" width="21.8" height="16.5" fill="none" stroke="#777" stroke-width="1.1" stroke-dasharray="2.6,2"/>
<rect x="926.3" y="243.3" width="10.5" height="8.8" fill="#D6D6D6" rx="1" stroke="#555" stroke-width="1.1" />
<path d="M937,245.5 l5.5,-2.3 v9 l-5.5,-2.3 z" fill="#D6D6D6" stroke="#555" stroke-width="1.1" stroke-linejoin="round"/>
<line x1="944.7" y1="248" x2="953.8" y2="248" stroke="#2EA043" stroke-width="1.5" />
<line x1="949.2" y1="243.5" x2="949.2" y2="252.5" stroke="#2EA043" stroke-width="1.5" />
<text x="925.4" y="265.9" font-size="11" fill="#262626" stroke="#262626" stroke-width="0.28" textLength="30.3" lengthAdjust="spacingAndGlyphs" >Screen</text>
<text x="917" y="280" font-size="11" fill="#262626" stroke="#262626" stroke-width="0.28" textLength="46.3" lengthAdjust="spacingAndGlyphs" >Recording</text>
<rect x="875.8" y="289.5" width="140.5" height="52" fill="#FFFFFF" stroke="#D6D6D6" stroke-width="1" filter="url(#dsh)"/>
<rect x="882" y="293" width="114.5" height="19" fill="#F2F2F2" />
<path d="M888.5,299.5 h2.5 l4,-3 v11 l-4,-3 h-2.5 z" fill="none" stroke="#444" stroke-width="1.1" stroke-linejoin="round"/>
<path d="M897.5,299.5 c0.8,1.2 0.8,3.6 0,4.8 M900.5,297.5 c1.5,2.3 1.5,6.8 0,9.1" fill="none" stroke="#444" stroke-width="1.1" />
<text x="910.3" y="307" font-size="11" fill="#262626" stroke="#262626" stroke-width="0.28" textLength="83.6" lengthAdjust="spacingAndGlyphs" >Audio on My PC...</text>
<line x1="973.8" y1="308.8" x2="979.8" y2="308.8" stroke="#333" stroke-width="0.9" />
<rect x="882" y="293" width="115.5" height="19.6" fill="none" stroke="#EC1018" stroke-width="2" />
<text x="910" y="331" font-size="11" fill="#262626" stroke="#262626" stroke-width="0.28" textLength="71" lengthAdjust="spacingAndGlyphs" >Record Audio...</text>
<line x1="910.5" y1="332.8" x2="917.5" y2="332.8" stroke="#333" stroke-width="0.9" />
<path d="M1003.5,305 V320 L1007,316.8 L1009.8,322.5 L1012,321.5 L1009.3,315.8 L1014,315.5 Z" fill="#FFFFFF" stroke="#333" stroke-width="1" stroke-linejoin="round"/>
<text x="107.8" y="674.2" font-size="11" fill="#3A3A3A" stroke="#3A3A3A" stroke-width="0.28" textLength="55.9" lengthAdjust="spacingAndGlyphs" >Slide 1 of 14</text>
<text x="192" y="674.2" font-size="11" fill="#3A3A3A" stroke="#3A3A3A" stroke-width="0.28" textLength="102" lengthAdjust="spacingAndGlyphs" >English (United States)</text>
<circle cx="314.7" cy="665" r="1.7" fill="none" stroke="#333" stroke-width="1.1"/>
<path d="M312.8,667 c-1.5,-0.8 -3.3,-0.6 -3.3,0.6 c0,1.1 1.6,1.8 2.8,2.3 c-0.3,1.8 -0.6,3.3 -0.5,4.6 c0.2,1 1.3,1 1.7,0.3 l1.2,-2.6" fill="none" stroke="#333" stroke-width="1.1" stroke-linejoin="round"/>
<path d="M316.6,667 c1.5,-0.8 3.3,-0.6 3.3,0.6 c0,1 -1.2,1.7 -2.3,2.1" fill="none" stroke="#333" stroke-width="1.1" />
<path d="M316.5,670.5 l4.5,4.8 M321,670.5 l-4.5,4.8" fill="none" stroke="#333" stroke-width="1.1" />
<text x="325" y="674.1" font-size="11" fill="#3A3A3A" stroke="#3A3A3A" stroke-width="0.28" textLength="109" lengthAdjust="spacingAndGlyphs" >Accessibility: Investigate</text>
<path d="M718,665.5 l3.5,-2.5 l3.5,2.5" fill="none" stroke="#444" stroke-width="1" />
<line x1="714.5" y1="669" x2="729" y2="669" stroke="#444" stroke-width="1" />
<line x1="714.5" y1="672" x2="729" y2="672" stroke="#444" stroke-width="1" />
<line x1="714.5" y1="675" x2="729" y2="675" stroke="#444" stroke-width="1" />
<text x="731" y="674.6" font-size="11" fill="#3A3A3A" stroke="#3A3A3A" stroke-width="0.28" textLength="26" lengthAdjust="spacingAndGlyphs" >Notes</text>
<rect x="774" y="660" width="35" height="18.5" fill="#DCDCDC" />
<rect x="785.3" y="664.3" width="12.5" height="10" fill="none" rx="1" stroke="#444" stroke-width="1.1" />
<line x1="788.5" y1="664.5" x2="788.5" y2="674.3" stroke="#444" stroke-width="1" />
<rect x="790.5" y="666.5" width="5" height="3" fill="#444" />
<rect x="820.5" y="664" width="5.5" height="5" fill="none" rx="1" stroke="#444" stroke-width="1.1" />
<rect x="828" y="664" width="5.5" height="5" fill="none" rx="1" stroke="#444" stroke-width="1.1" />
<rect x="820.5" y="670.5" width="5.5" height="5" fill="none" rx="1" stroke="#444" stroke-width="1.1" />
<rect x="828" y="670.5" width="5.5" height="5" fill="none" rx="1" stroke="#444" stroke-width="1.1" />
<path d="M856.5,664.5 q3,-1 6,0 q3,-1 6,0 v10 q-3,-1 -6,0 q-3,-1 -6,0 z M862.5,664.5 v10" fill="none" stroke="#444" stroke-width="1.1" />
<rect x="893.5" y="664" width="11" height="6" fill="none" stroke="#444" stroke-width="1.1" />
<line x1="899" y1="670" x2="899" y2="675.5" stroke="#444" stroke-width="1.1" />
<line x1="896" y1="675.5" x2="902" y2="675.5" stroke="#444" stroke-width="1.1" />
<line x1="920.5" y1="669" x2="926.5" y2="669" stroke="#555" stroke-width="1.1" />
<line x1="932" y1="669" x2="1021" y2="669" stroke="#8A8A8A" stroke-width="1" />
<rect x="956.5" y="664.5" width="5" height="10" fill="#505050" />
<line x1="977" y1="666.5" x2="977" y2="671.5" stroke="#777" stroke-width="1" />
<line x1="1025" y1="669" x2="1032" y2="669" stroke="#555" stroke-width="1.1" />
<line x1="1028.5" y1="665.5" x2="1028.5" y2="672.5" stroke="#555" stroke-width="1.1" />
<text x="1043" y="674.3" font-size="11" fill="#3A3A3A" stroke="#3A3A3A" stroke-width="0.28" textLength="19" lengthAdjust="spacingAndGlyphs" >60%</text>
<rect x="1075.5" y="665.5" width="8" height="7" fill="none" stroke="#444" stroke-width="1.1" />
<path d="M1077,664 l2.5,-2 l2.5,2 M1077,674 l2.5,2 l2.5,-2 M1074,667 l-1.6,2 l1.6,2 M1085,667 l1.6,2 l-1.6,2" fill="none" stroke="#444" stroke-width="1" />
<text x="1023" y="718" font-size="14.5" fill="#5E5E5E" stroke="#5E5E5E" stroke-width="0.28" textLength="129" lengthAdjust="spacingAndGlyphs" >SLIDEMODEL.COM</text>
</svg>
</body></html>
